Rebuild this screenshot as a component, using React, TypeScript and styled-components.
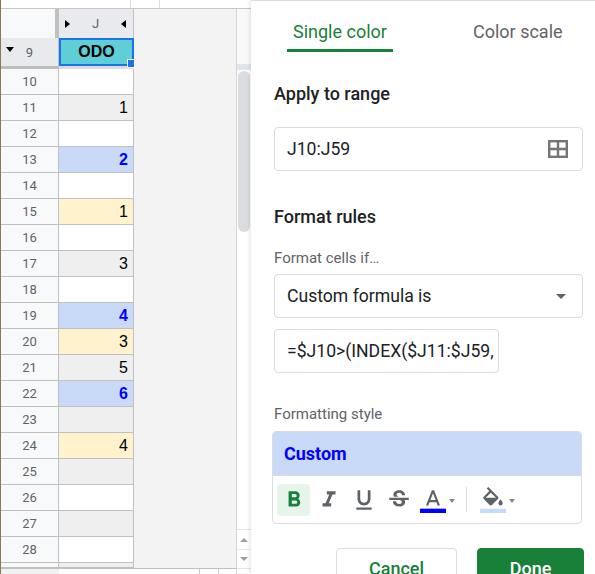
import styled, { createGlobalStyle } from 'styled-components';

const GlobalStyle = createGlobalStyle`
  html, body {
    margin: 0;
    padding: 0;
    background: #fff;
    overflow: hidden;
  }
  body {
    font-family: Roboto, "Liberation Sans", Arial, sans-serif;
  }
  * {
    box-sizing: border-box;
  }
`;

const Page = styled.div`
  display: flex;
  width: 595px;
  height: 574px;
  overflow: hidden;
`;

/* ---------- spreadsheet side ---------- */

const Sheet = styled.div`
  width: 251px;
  flex: none;
  display: flex;
  flex-direction: column;
  border-left: 1px solid #8a7a52;
`;

const TopStrip = styled.div`
  height: 9px;
  flex: none;
  display: flex;
  gap: 28px;
  padding-left: 129px;
  background: #fff;
  border-bottom: 1px solid #c7c7c7;
`;

const Tick = styled.span`
  width: 1px;
  height: 8px;
  background: #dadce0;
`;

const SheetBody = styled.div`
  flex: 1;
  display: flex;
  min-height: 0;
`;

const Grid = styled.div`
  width: 235px;
  flex: none;
  display: flex;
  flex-direction: column;
  background: #f3f3f3;
`;

const Row = styled.div<{ $h: number }>`
  display: grid;
  grid-template-columns: 58px 75px 1fr;
  height: ${(p) => p.$h}px;
  flex: none;
`;

const Corner = styled.div`
  background: #f8f9fa;
  border-right: 4px solid #c0c0c0;
`;

const ColHeader = styled.div`
  display: flex;
  align-items: center;
  justify-content: space-between;
  padding: 0 7px 0 6px;
  background: #e8eaed;
  border-right: 1px solid #c0c0c0;
  font-size: 13px;
  color: #5f6368;
`;

const ArrowRight = styled.span`
  width: 0;
  height: 0;
  border-top: 4px solid transparent;
  border-bottom: 4px solid transparent;
  border-left: 5px solid #000;
`;

const ArrowLeft = styled.span`
  width: 0;
  height: 0;
  border-top: 4px solid transparent;
  border-bottom: 4px solid transparent;
  border-right: 5px solid #000;
`;

const Blank = styled.div`
  background: #f3f3f3;
`;

const RowHead = styled.div<{ $active?: boolean }>`
  position: relative;
  display: flex;
  align-items: center;
  justify-content: center;
  background: ${(p) => (p.$active ? '#e8eaed' : '#f8f9fa')};
  border-right: 1px solid #c0c0c0;
  border-bottom: ${(p) => (p.$active ? 'none' : '1px solid #c0c0c0')};
  font-size: 13px;
  color: #5f6368;
`;

const Toggle = styled.span`
  position: absolute;
  left: 5px;
  top: 9px;
  width: 0;
  height: 0;
  border-left: 4px solid transparent;
  border-right: 4px solid transparent;
  border-top: 5px solid #000;
`;

const HeadCell = styled.div`
  position: relative;
  display: flex;
  align-items: center;
  justify-content: center;
  background: #60ced6;
  border: 2px solid #1a73e8;
  font-family: "Liberation Sans", Arial, sans-serif;
  font-weight: 700;
  font-size: 16px;
  color: #000;
`;

const Handle = styled.span`
  position: absolute;
  right: -3px;
  bottom: -4px;
  width: 8px;
  height: 9px;
  background: #1a73e8;
  border: 1px solid #fff;
  z-index: 2;
`;

const FreezePart = styled.div<{ $c: string }>`
  background: ${(p) => p.$c};
`;

const tones = {
  white: '#ffffff',
  gray: '#efefef',
  blue: '#c9daf8',
  yellow: '#fff2cc',
};

type Tone = keyof typeof tones;

const Cell = styled.div<{ $tone: Tone }>`
  display: flex;
  align-items: center;
  justify-content: flex-end;
  padding-right: 5px;
  background: ${(p) => tones[p.$tone]};
  border-right: 1px solid #c0c0c0;
  border-bottom: 1px solid #c0c0c0;
  font-family: "Liberation Sans", Arial, sans-serif;
  font-size: 16px;
  font-weight: ${(p) => (p.$tone === 'blue' ? 700 : 400)};
  color: ${(p) => (p.$tone === 'blue' ? '#0000ff' : '#000')};
`;

const HBar = styled.div`
  flex: 1;
  display: flex;
  border-top: 1px solid #c0c0c0;
  background: #fff;
`;

const HBarLeft = styled.div`
  width: 58px;
  background: #f1f1f1;
`;

const HBarTick = styled.span<{ $at: number }>`
  width: 1px;
  height: 6px;
  margin-left: ${(p) => p.$at}px;
  background: #c8c8c8;
`;

const VScroll = styled.div`
  width: 15px;
  flex: none;
  display: flex;
  flex-direction: column;
  border-left: 1px solid #d6d6d6;
  background: #fff;
`;

const ScrollTop = styled.div`
  height: 55px;
  flex: none;
  background: #f9f9f9;
`;

const ScrollSplit = styled.div`
  height: 6px;
  flex: none;
  background: #e1e6ee;
`;

const ScrollTrack = styled.div`
  flex: 1;
  padding: 1px 1px 0 1px;
  background: #fff;
`;

const Thumb = styled.div`
  height: 161px;
  border-radius: 6px;
  background: #dadce0;
`;

const ScrollButton = styled.div<{ $up?: boolean }>`
  height: ${(p) => (p.$up ? 20 : 19)}px;
  flex: none;
  display: flex;
  align-items: center;
  justify-content: center;
  border-top: 1px solid ${(p) => (p.$up ? '#e4e4e4' : '#e6e8f0')};

  &::after {
    content: '';
    width: 0;
    height: 0;
    border-left: 4px solid transparent;
    border-right: 4px solid transparent;
    ${(p) => (p.$up ? 'border-bottom' : 'border-top')}: 4px solid #9aa0a6;
  }
`;

const ScrollFoot = styled.div`
  height: 6px;
  flex: none;
  border-top: 1px solid #e4e4e4;
`;

/* ---------- side panel ---------- */

const Panel = styled.div`
  flex: 1;
  display: flex;
  flex-direction: column;
  padding: 0 11px 0 23px;
  border-top: 1px solid #dadce0;
  box-shadow: -2px 0 3px rgba(0, 0, 0, 0.08);
  background: #fff;
  color: #202124;
  overflow: hidden;

  & > * {
    flex-shrink: 0;
  }
`;

const TabRow = styled.div`
  display: flex;
  gap: 74px;
  margin-left: 13px;
`;

const Tab = styled.div<{ $active?: boolean }>`
  padding: 19px 6px 5px;
  line-height: 24px;
  font-size: 18px;
  color: ${(p) => (p.$active ? '#188038' : '#5f6368')};
  border-bottom: 3px solid ${(p) => (p.$active ? '#188038' : 'transparent')};
`;

const SectionTitle = styled.div<{ $top: number }>`
  margin-top: ${(p) => p.$top}px;
  line-height: 24px;
  font-size: 18px;
  font-weight: 500;
  color: #202124;
`;

const Label = styled.div<{ $top: number }>`
  margin-top: ${(p) => p.$top}px;
  line-height: 20px;
  font-size: 15px;
  color: #5f6368;
`;

const Field = styled.div<{ $top: number; $w?: number }>`
  margin-top: ${(p) => p.$top}px;
  width: ${(p) => p.$w ?? 309}px;
  height: 44px;
  display: flex;
  align-items: center;
  justify-content: space-between;
  padding: 0 14px 0 12px;
  border: 1px solid #dadce0;
  border-radius: 4px;
  font-size: 17.6px;
  color: #202124;
  white-space: nowrap;
  overflow: hidden;
`;

const Caret = styled.span`
  margin-right: 2px;
  width: 0;
  height: 0;
  border-left: 5px solid transparent;
  border-right: 5px solid transparent;
  border-top: 5px solid #5f6368;
`;

const StyleBox = styled.div`
  margin: 7px 0 0 -2px;
  width: 310px;
  border: 1px solid #dadce0;
  border-radius: 4px;
  overflow: hidden;
`;

const Preview = styled.div`
  height: 44px;
  display: flex;
  align-items: center;
  padding-left: 11px;
  background: #c9daf8;
  border-bottom: 1px solid #dadce0;
  font-size: 18px;
  font-weight: 700;
  color: #0000ff;
`;

const Toolbar = styled.div`
  height: 47px;
  display: flex;
  align-items: center;
  gap: 2px;
  padding-left: 4px;
`;

const ToolButton = styled.div<{ $active?: boolean }>`
  width: 33px;
  height: 32px;
  display: flex;
  align-items: center;
  justify-content: center;
  border-radius: 4px;
  background: ${(p) => (p.$active ? '#e6f4ea' : 'transparent')};
  color: ${(p) => (p.$active ? '#188038' : '#5f6368')};
`;

const ColorTool = styled.div`
  display: flex;
  align-items: center;
  gap: 3px;
  padding-left: 3px;
  color: #5f6368;
`;

const SmallCaret = styled.span`
  margin-top: 2px;
  width: 0;
  height: 0;
  border-left: 3.5px solid transparent;
  border-right: 3.5px solid transparent;
  border-top: 4px solid #80868b;
`;

const Separator = styled.span`
  width: 1px;
  height: 25px;
  margin: 0 8px 0 9px;
  background: #dadce0;
`;

const Footer = styled.div`
  margin-top: 24px;
  display: flex;
  justify-content: flex-end;
  gap: 20px;
`;

const Button = styled.div<{ $primary?: boolean; $w: number }>`
  width: ${(p) => p.$w}px;
  height: 40px;
  flex: none;
  display: flex;
  align-items: center;
  justify-content: center;
  border-radius: 4px;
  font-size: 18px;
  font-weight: 500;
  background: ${(p) => (p.$primary ? '#188038' : '#fff')};
  color: ${(p) => (p.$primary ? '#fff' : '#188038')};
  border: 1px solid ${(p) => (p.$primary ? '#188038' : '#dadce0')};
`;

/* ---------- icons ---------- */

const paths = {
  bold: 'M15.6 10.79c.97-.67 1.65-1.77 1.65-2.79 0-2.26-1.75-4-4-4H7v14h7.04c2.09 0 3.71-1.7 3.71-3.79 0-1.52-.86-2.82-2.15-3.42zM10 6.5h3c.83 0 1.5.67 1.5 1.5s-.67 1.5-1.5 1.5h-3v-3zm3.5 9H10v-3h3.5c.83 0 1.5.67 1.5 1.5s-.67 1.5-1.5 1.5z',
  italic: 'M10 4v3h2.21l-3.42 8H6v3h8v-3h-2.21l3.42-8H18V4z',
  underline: 'M12 17c3.31 0 6-2.69 6-6V3h-2.5v8c0 1.93-1.57 3.5-3.5 3.5S8.5 12.93 8.5 11V3H6v8c0 3.31 2.69 6 6 6zm-7 2v2h14v-2H5z',
  strike:
    'M7.24 8.75c-.26-.48-.39-1.03-.39-1.67 0-.61.13-1.16.4-1.67.26-.5.63-.93 1.11-1.29.48-.35 1.05-.63 1.7-.83.66-.19 1.39-.29 2.18-.29.81 0 1.54.11 2.21.34.66.22 1.23.54 1.69.94.47.4.83.88 1.08 1.43.25.55.38 1.15.38 1.81h-3.01c0-.31-.05-.59-.15-.85-.09-.27-.24-.49-.44-.68-.2-.19-.45-.33-.75-.44-.3-.1-.66-.16-1.06-.16-.39 0-.74.04-1.03.13-.29.09-.53.21-.72.36-.19.16-.34.34-.44.55-.1.21-.15.43-.15.66 0 .48.25.88.74 1.21.38.25.77.48 1.41.7H7.39c-.05-.08-.11-.17-.15-.25zM21 12v-2H3v2h9.62c.18.07.4.14.55.2.37.17.66.34.87.51.21.17.35.36.43.57.07.2.11.43.11.69 0 .23-.05.45-.14.66-.09.2-.23.38-.42.53-.19.15-.42.26-.71.35-.29.08-.63.13-1.01.13-.43 0-.83-.04-1.18-.13s-.66-.23-.91-.42c-.25-.19-.45-.44-.59-.75-.14-.31-.25-.76-.25-1.21H6.4c0 .55.08 1.13.24 1.58.16.45.37.85.65 1.21.28.35.6.66.98.92.37.26.78.48 1.22.65.44.17.9.3 1.38.39.48.08.96.13 1.44.13.8 0 1.53-.09 2.18-.28s1.21-.45 1.67-.79c.46-.34.82-.77 1.07-1.27s.38-1.07.38-1.71c0-.6-.1-1.14-.31-1.61-.05-.11-.11-.23-.17-.33H21z',
  letter: 'M11 3L5.5 17h2.25l1.12-3h6.25l1.12 3h2.25L13 3h-2zm-1.38 9L12 5.67 14.38 12H9.62z',
  bucket:
    'M16.56 8.94L7.62 0 6.21 1.41l2.38 2.38-5.15 5.15c-.59.59-.59 1.54 0 2.12l5.5 5.5c.29.29.68.44 1.06.44s.77-.15 1.06-.44l5.5-5.5c.59-.58.59-1.53 0-2.12zM5.21 10L10 5.21 14.79 10H5.21zM19 11.5s-2 2.170-2 3.5c0 1.1.9 2 2 2s2-.9 2-2c0-1.33-2-3.5-2-3.5z',
};

const Icon = ({ d, bar }: { d: string; bar?: string }) => (
  <svg width="26" height="26" viewBox="0 0 24 24" fill="currentColor">
    <path d={d} />
    {bar && <rect x="0" y="20" width="24" height="4" fill={bar} />}
  </svg>
);

const RangeIcon = () => (
  <svg width="20" height="18" viewBox="0 0 20 18" fill="none" stroke="#757575" strokeWidth="2.4">
    <rect x="1.2" y="1.2" width="17.6" height="15.6" />
    <path d="M10 0v18M0 9h20" />
  </svg>
);

/* ---------- data ---------- */

const rows: { n: number; tone: Tone; v?: string }[] = [
  { n: 10, tone: 'white' },
  { n: 11, tone: 'gray', v: '1' },
  { n: 12, tone: 'white' },
  { n: 13, tone: 'blue', v: '2' },
  { n: 14, tone: 'white' },
  { n: 15, tone: 'yellow', v: '1' },
  { n: 16, tone: 'white' },
  { n: 17, tone: 'gray', v: '3' },
  { n: 18, tone: 'white' },
  { n: 19, tone: 'blue', v: '4' },
  { n: 20, tone: 'yellow', v: '3' },
  { n: 21, tone: 'gray', v: '5' },
  { n: 22, tone: 'blue', v: '6' },
  { n: 23, tone: 'gray' },
  { n: 24, tone: 'yellow', v: '4' },
  { n: 25, tone: 'gray' },
  { n: 26, tone: 'white' },
  { n: 27, tone: 'gray' },
  { n: 28, tone: 'white' },
];

export default function App() {
  return (
    <>
      <GlobalStyle />
      <Page>
        <Sheet>
          <TopStrip>
            <Tick />
            <Tick />
          </TopStrip>
          <SheetBody>
            <Grid>
              <Row $h={29}>
                <Corner />
                <ColHeader>
                  <ArrowRight />
                  J
                  <ArrowLeft />
                </ColHeader>
                <Blank />
              </Row>
              <Row $h={28}>
                <RowHead $active>
                  <Toggle />9
                </RowHead>
                <HeadCell>
                  ODO
                  <Handle />
                </HeadCell>
                <Blank />
              </Row>
              <Row $h={3}>
                <FreezePart $c="#bdbdbd" />
                <FreezePart $c="#dadce0" />
                <FreezePart $c="#f3f3f3" />
              </Row>
              {rows.map((r) => (
                <Row $h={26} key={r.n}>
                  <RowHead>{r.n}</RowHead>
                  <Cell $tone={r.tone}>{r.v}</Cell>
                  <Blank />
                </Row>
              ))}
              <Row $h={5}>
                <RowHead />
                <Cell $tone="gray" />
                <Blank />
              </Row>
              <HBar>
                <HBarLeft />
                <HBarTick $at={140} />
                <HBarTick $at={18} />
              </HBar>
            </Grid>
            <VScroll>
              <ScrollTop />
              <ScrollSplit />
              <ScrollTrack>
                <Thumb />
              </ScrollTrack>
              <ScrollButton $up />
              <ScrollButton />
              <ScrollFoot />
            </VScroll>
          </SheetBody>
        </Sheet>

        <Panel>
          <TabRow>
            <Tab $active>Single color</Tab>
            <Tab>Color scale</Tab>
          </TabRow>

          <SectionTitle $top={30}>Apply to range</SectionTitle>
          <Field $top={21}>
            J10:J59
            <RangeIcon />
          </Field>

          <SectionTitle $top={34}>Format rules</SectionTitle>
          <Label $top={19}>Format cells if…</Label>
          <Field $top={6}>
            Custom formula is
            <Caret />
          </Field>
          <Field $top={11} $w={225}>
            =$J10&gt;(INDEX($J11:$J59,
          </Field>

          <Label $top={31}>Formatting style</Label>
          <StyleBox>
            <Preview>Custom</Preview>
            <Toolbar>
              <ToolButton $active>
                <Icon d={paths.bold} />
              </ToolButton>
              <ToolButton>
                <Icon d={paths.italic} />
              </ToolButton>
              <ToolButton>
                <Icon d={paths.underline} />
              </ToolButton>
              <ToolButton>
                <Icon d={paths.strike} />
              </ToolButton>
              <ColorTool>
                <Icon d={paths.letter} bar="#0000ff" />
                <SmallCaret />
              </ColorTool>
              <Separator />
              <ColorTool>
                <Icon d={paths.bucket} bar="#c9daf8" />
                <SmallCaret />
              </ColorTool>
            </Toolbar>
          </StyleBox>

          <Footer>
            <Button $w={121}>Cancel</Button>
            <Button $w={107} $primary>
              Done
            </Button>
          </Footer>
        </Panel>
      </Page>
    </>
  );
}
